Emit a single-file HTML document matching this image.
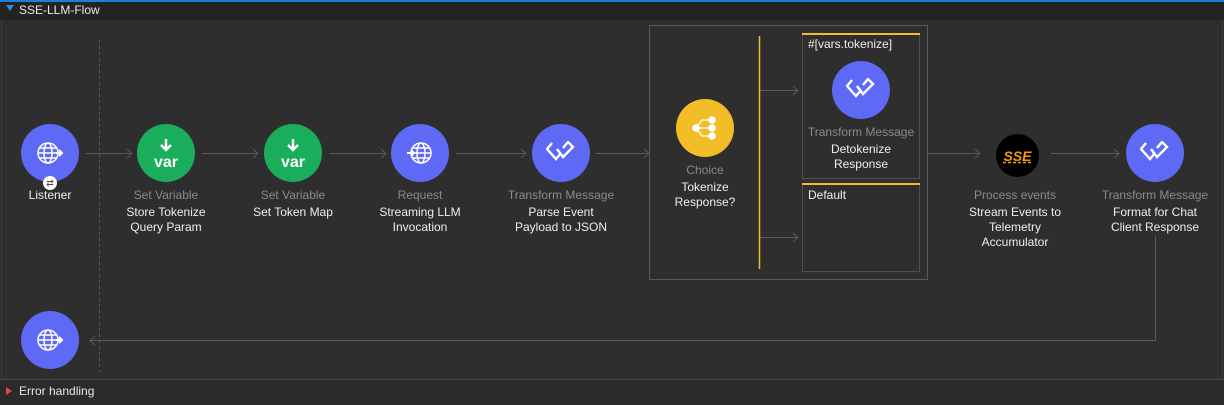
<!DOCTYPE html>
<html><head><meta charset="utf-8"><style>
*{margin:0;padding:0;box-sizing:border-box}
body{width:1224px;height:405px;background:#2e2e2e;font-family:"Liberation Sans",sans-serif;position:relative;overflow:hidden;font-size:12px;color:#eee}
.a{position:absolute}
.c{position:absolute;width:58px;height:58px;border-radius:50%;display:flex;align-items:center;justify-content:center}
.p{background:#5e69f5}.g{background:#1aad5c}.y{background:#f2bd26}
.lb{position:absolute;width:160px;text-align:center;line-height:15px;font-size:12px}
.t{color:#8a8a8a}
</style></head><body>
<div class="a" style="left:0;top:0;width:1224px;height:2px;background:#1e7fd6"></div>
<div class="a" style="left:0;top:2px;width:1224px;height:18px;background:#232323"></div>
<div class="a" style="left:6px;top:5px;width:0;height:0;border-left:4px solid transparent;border-right:4px solid transparent;border-top:6px solid #2a8fe6"></div>
<div class="a" style="left:19px;top:3px;font-size:12px;color:#e8e8e8">SSE-LLM-Flow</div>
<div class="a" style="left:1px;top:20px;width:1px;height:360px;background:#3c3c3c"></div>
<div class="a" style="left:1222px;top:20px;width:1px;height:385px;background:#3c3c3c"></div>
<div class="a" style="left:0;top:379px;width:1224px;height:1px;background:#4a4a4a"></div>
<div class="a" style="left:0;top:380px;width:1224px;height:25px;background:#2b2b2b"></div>
<div class="a" style="left:6px;top:387px;width:0;height:0;border-top:4px solid transparent;border-bottom:4px solid transparent;border-left:6px solid #e04545"></div>
<div class="a" style="left:19px;top:384px;color:#e8e8e8">Error handling</div>

<svg class="a" style="left:0;top:0" width="1224" height="405">
<g stroke="#5a5a5a" stroke-width="1" fill="none">
<line x1="99.5" y1="40" x2="99.5" y2="372" stroke-dasharray="3,3"/>
<path d="M86 153.5H132M127 149l5 4.5-5 4.5"/>
<path d="M202 153.5H258M253 149l5 4.5-5 4.5"/>
<path d="M329 153.5H386M381 149l5 4.5-5 4.5"/>
<path d="M456 153.5H526M521 149l5 4.5-5 4.5"/>
<path d="M596 153.5H649M644 149l5 4.5-5 4.5"/>
<path d="M760 90.5H798M793 86l5 4.5-5 4.5"/>
<path d="M760 237.5H798M793 233l5 4.5-5 4.5"/>
<path d="M928 153.5H980M975 149l5 4.5-5 4.5"/>
<path d="M1051 153.5H1119M1114 149l5 4.5-5 4.5"/>
<path d="M1155.5 236V340.5H89M95 336l-5 4.5 5 4.5"/>
</g>
<rect x="649.5" y="25.5" width="278" height="254" fill="none" stroke="#5a5a5a"/>
<line x1="759.5" y1="36" x2="759.5" y2="269" stroke="#f2bd26" stroke-width="1.5"/>
<rect x="802.5" y="34.5" width="117" height="144" fill="none" stroke="#505050"/>
<line x1="802" y1="34" x2="920" y2="34" stroke="#f2bd26" stroke-width="2"/>
<rect x="802.5" y="184.5" width="117" height="87" fill="none" stroke="#505050"/>
<line x1="802" y1="184" x2="920" y2="184" stroke="#f2bd26" stroke-width="2"/>
</svg>

<div class="c p" style="left:21px;top:124px"><svg width="30" height="30" viewBox="0 0 30 30" fill="none" stroke="#fff" stroke-width="1.5"><circle cx="13" cy="15" r="10"/><ellipse cx="13" cy="15" rx="4" ry="10"/><path d="M3 15h20M5 10h16M5 20h16"/><path d="M21 15h6M24 12l3 3-3 3" stroke-width="2"/></svg></div>
<div class="a" style="left:43px;top:176px;width:14px;height:14px;border-radius:50%;background:#fff;color:#444;font-size:9px;text-align:center;line-height:14px">⇄</div>
<div class="lb" style="left:-30px;top:188px">Listener</div>

<div class="c g" style="left:137px;top:124px"><svg width="34" height="36" viewBox="0 0 34 36"><path d="M17 4v10M12 10l5 5 5-5" stroke="#fff" stroke-width="2.5" fill="none"/><text x="17" y="32" fill="#fff" font-size="16" font-weight="bold" text-anchor="middle" font-family="Liberation Sans">var</text></svg></div>
<div class="lb t" style="left:86px;top:188px">Set Variable</div>
<div class="lb" style="left:86px;top:205px">Store Tokenize<br>Query Param</div>

<div class="c g" style="left:264px;top:124px"><svg width="34" height="36" viewBox="0 0 34 36"><path d="M17 4v10M12 10l5 5 5-5" stroke="#fff" stroke-width="2.5" fill="none"/><text x="17" y="32" fill="#fff" font-size="16" font-weight="bold" text-anchor="middle" font-family="Liberation Sans">var</text></svg></div>
<div class="lb t" style="left:213px;top:188px">Set Variable</div>
<div class="lb" style="left:213px;top:205px">Set Token Map</div>

<div class="c p" style="left:391px;top:124px"><svg width="30" height="30" viewBox="0 0 30 30" fill="none" stroke="#fff" stroke-width="1.5"><circle cx="16" cy="15" r="10"/><ellipse cx="16" cy="15" rx="4" ry="10"/><path d="M6 15h20M8 10h16M8 20h16"/><path d="M2 15h7M6 12l3 3-3 3" stroke-width="2"/></svg></div>
<div class="lb t" style="left:340px;top:188px">Request</div>
<div class="lb" style="left:340px;top:205px">Streaming LLM<br>Invocation</div>

<div class="c p" style="left:532px;top:124px"><svg width="30" height="24" viewBox="0 0 30 24" fill="none" stroke="#fff" stroke-width="2.4" stroke-linejoin="miter"><path d="M6 2L1 8l9 10 5-6M11 8l6 8 10-10-5-5-5 6"/></svg></div>
<div class="lb t" style="left:481px;top:188px">Transform Message</div>
<div class="lb" style="left:481px;top:205px">Parse Event<br>Payload to JSON</div>

<div class="c y" style="left:676px;top:99px"><svg width="30" height="30" viewBox="0 0 30 30" fill="none" stroke="#fff" stroke-width="1.5"><path d="M6 15h16M6 15l6-8h10M6 15l6 8h10" opacity=".9"/><circle cx="6" cy="15" r="3" fill="#fff"/><circle cx="22" cy="7" r="3" fill="#fff"/><circle cx="22" cy="15" r="3" fill="#fff"/><circle cx="22" cy="23" r="3" fill="#fff"/></svg></div>
<div class="lb t" style="left:625px;top:163px">Choice</div>
<div class="lb" style="left:625px;top:180px">Tokenize<br>Response?</div>

<div class="a" style="left:808px;top:37px;color:#eee">#[vars.tokenize]</div>
<div class="c p" style="left:832px;top:61px"><svg width="30" height="24" viewBox="0 0 30 24" fill="none" stroke="#fff" stroke-width="2.4"><path d="M6 2L1 8l9 10 5-6M11 8l6 8 10-10-5-5-5 6"/></svg></div>
<div class="lb t" style="left:781px;top:125px">Transform Message</div>
<div class="lb" style="left:781px;top:142px">Detokenize<br>Response</div>
<div class="a" style="left:808px;top:188px;color:#eee">Default</div>

<div class="c" style="left:996px;top:134px;width:43px;height:43px;background:#000"><span style="color:#f29a12;font-weight:bold;font-style:italic;font-size:14px;text-decoration:underline dashed">SSE</span></div>
<div class="lb t" style="left:935px;top:188px">Process events</div>
<div class="lb" style="left:935px;top:205px">Stream Events to<br>Telemetry<br>Accumulator</div>

<div class="c p" style="left:1126px;top:124px"><svg width="30" height="24" viewBox="0 0 30 24" fill="none" stroke="#fff" stroke-width="2.4"><path d="M6 2L1 8l9 10 5-6M11 8l6 8 10-10-5-5-5 6"/></svg></div>
<div class="lb t" style="left:1075px;top:188px">Transform Message</div>
<div class="lb" style="left:1075px;top:205px">Format for Chat<br>Client Response</div>

<div class="c p" style="left:21px;top:311px"><svg width="30" height="30" viewBox="0 0 30 30" fill="none" stroke="#fff" stroke-width="1.5"><circle cx="13" cy="15" r="10"/><ellipse cx="13" cy="15" rx="4" ry="10"/><path d="M3 15h20M5 10h16M5 20h16"/><path d="M21 15h6M24 12l3 3-3 3" stroke-width="2"/></svg></div>
</body></html>
